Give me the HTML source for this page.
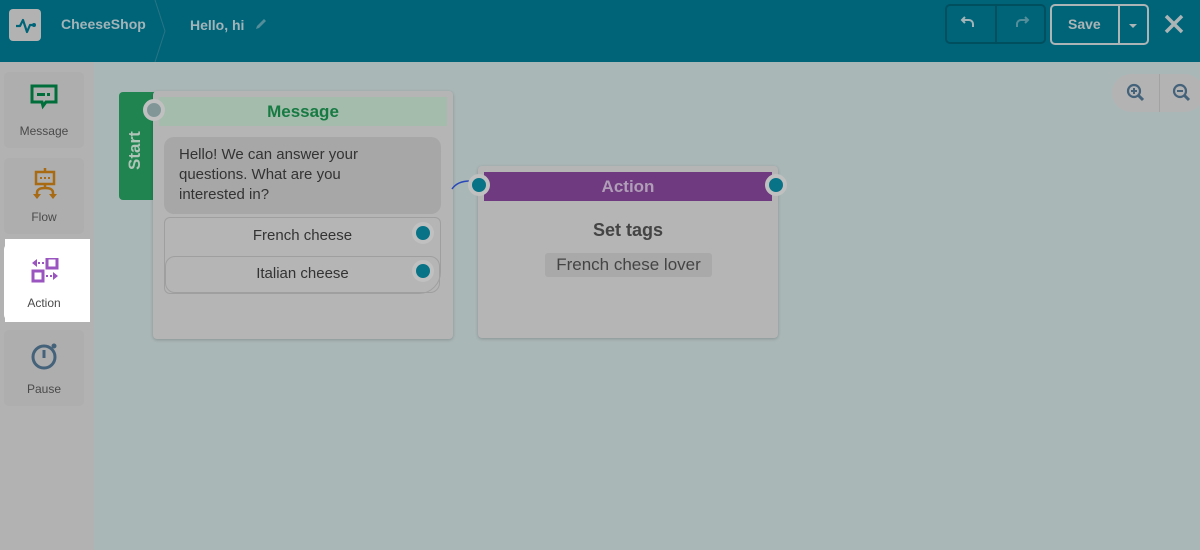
<!DOCTYPE html>
<html><head><style>
*{box-sizing:border-box;margin:0;padding:0}
body{width:1200px;height:550px;overflow:hidden;background:#aab7b7;font-family:"Liberation Sans",sans-serif;position:relative}
.hdr{position:absolute;left:0;top:0;width:1200px;height:62px;background:#006479}
.abs{position:absolute}
.side{position:absolute;left:0;top:62px;width:94px;height:488px;background:#b2b2b2}
.tool{position:absolute;left:4px;width:80px;height:76px;background:#aeaeae;border-radius:5px;text-align:center;font-size:12px;color:#4a4a4a}
.tool span{position:absolute;left:0;right:0;top:52px}
.node{position:absolute;background:#b5b5b5;border-radius:4px;box-shadow:0 1px 3px rgba(0,0,0,.2)}
.dot{position:absolute;width:22px;height:22px;border-radius:50%;background:#087387;border:4px solid #c0c0c0}
</style></head><body>
<div class="hdr">
  <div class="abs" style="left:9px;top:9px;width:32px;height:32px;background:#b2b2b2;border-radius:4px">
    <svg width="32" height="32" viewBox="0 0 32 32"><path d="M7 17h4l3-6 4 12 3-7h3" stroke="#006479" stroke-width="2.2" fill="none" stroke-linejoin="round"/><circle cx="25" cy="16" r="2" fill="#006479"/></svg>
  </div>
  <div class="abs" style="left:61px;top:16px;font-size:14px;font-weight:bold;color:#a2b4b8">CheeseShop</div>
  <svg class="abs" style="left:154px;top:0" width="14" height="62"><path d="M1 0 L11 31 L1 62" stroke="#2a7385" fill="none"/></svg>
  <div class="abs" style="left:190px;top:17px;font-size:14px;font-weight:bold;color:#a2b4b8">Hello, hi</div>
  <svg class="abs" style="left:254px;top:17px" width="14" height="14"><path d="M2 12l1-3 7-7 2 2-7 7z" fill="#558e9b"/></svg>
  <div class="abs" style="left:945px;top:4px;width:101px;height:40px;border:2px solid #004f5f;border-radius:5px"></div>
  <div class="abs" style="left:995px;top:5px;width:2px;height:38px;background:#004f5f"></div>
  <svg class="abs" style="left:960px;top:14px" width="18" height="18"><path d="M5 3L2 6l3 3M2 6h7a4 4 0 0 1 4 4v3" stroke="#a2b4b8" stroke-width="2" fill="none"/></svg>
  <svg class="abs" style="left:1012px;top:14px" width="18" height="18"><path d="M13 3l3 3-3 3M16 6H9a4 4 0 0 0-4 4v3" stroke="#558e9b" stroke-width="2" fill="none"/></svg>
  <div class="abs" style="left:1050px;top:4px;width:99px;height:41px;border:2px solid #adb4b5;border-radius:5px"></div>
  <div class="abs" style="left:1118px;top:5px;width:2px;height:39px;background:#adb4b5"></div>
  <div class="abs" style="left:1068px;top:16px;font-size:14px;font-weight:bold;color:#adb4b5">Save</div>
  <div class="abs" style="left:1129px;top:24px;border-left:4px solid transparent;border-right:4px solid transparent;border-top:4px solid #adb4b5"></div>
  <svg class="abs" style="left:1163px;top:13px" width="22" height="22"><path d="M3 3L19 19M19 3L3 19" stroke="#adb4b5" stroke-width="3.5"/></svg>
</div>
<div class="side">
  <div class="tool" style="top:10px"><svg class="abs" style="left:26px;top:12px" width="28" height="28"><path d="M2 2h24v16H16l-3 4-1-4H2z" fill="none" stroke="#006e3a" stroke-width="3"/><rect x="7" y="9" width="8" height="3" fill="#006e3a"/><rect x="17" y="9" width="3" height="3" fill="#006e3a"/></svg><span>Message</span></div>
  <div class="tool" style="top:96px"><svg class="abs" style="left:26px;top:10px" width="30" height="34"><rect x="6" y="4" width="18" height="12" fill="none" stroke="#a86a12" stroke-width="2.5"/><rect x="10" y="9" width="2" height="2" fill="#a86a12"/><rect x="14" y="9" width="2" height="2" fill="#a86a12"/><rect x="18" y="9" width="2" height="2" fill="#a86a12"/><path d="M15 0v4M15 16v4M15 20c-5 0-8 1-8 5v3M15 20c5 0 8 1 8 5v3" stroke="#a86a12" stroke-width="2.5" fill="none"/><path d="M3 26l4 5 4-5zM19 26l4 5 4-5z" fill="#a86a12"/></svg><span>Flow</span></div>
  <div class="abs" style="left:5px;top:177px;width:85px;height:83px;background:#fff"></div>
  <div class="tool" style="top:182px;background:#fff"><svg class="abs" style="left:27px;top:14px" width="28" height="26"><path d="M1 5l5-4v8z" fill="#9a55c0"/><rect x="7" y="4" width="2" height="2" fill="#9a55c0"/><rect x="11" y="4" width="2" height="2" fill="#9a55c0"/><rect x="16" y="0" width="10" height="10" fill="none" stroke="#9a55c0" stroke-width="3"/><rect x="2" y="13" width="10" height="10" fill="none" stroke="#9a55c0" stroke-width="3"/><rect x="15" y="17" width="2" height="2" fill="#9a55c0"/><rect x="19" y="17" width="2" height="2" fill="#9a55c0"/><path d="M27 18l-5-4v8z" fill="#9a55c0"/></svg><span>Action</span></div>
  <div class="tool" style="top:268px"><svg class="abs" style="left:26px;top:11px" width="30" height="30"><circle cx="14" cy="16" r="11" fill="none" stroke="#44627a" stroke-width="3"/><path d="M14 9v8" stroke="#44627a" stroke-width="3"/><circle cx="24" cy="5" r="2.5" fill="#44627a"/></svg><span>Pause</span></div>
</div>
<div class="abs" style="left:1112px;top:74px;width:92px;height:38px;border-radius:19px;background:#b3b3b3"></div>
<div class="abs" style="left:1159px;top:74px;width:1px;height:38px;background:#a2a2a2"></div>
<svg class="abs" style="left:1126px;top:83px" width="20" height="20"><circle cx="8" cy="8" r="6" fill="none" stroke="#44627a" stroke-width="2.2"/><path d="M12 12l5 5" stroke="#44627a" stroke-width="3"/><path d="M5 8h6M8 5v6" stroke="#44627a" stroke-width="2"/></svg>
<svg class="abs" style="left:1172px;top:83px" width="20" height="20"><circle cx="8" cy="8" r="6" fill="none" stroke="#44627a" stroke-width="2.2"/><path d="M12 12l5 5" stroke="#44627a" stroke-width="3"/><path d="M5 8h6" stroke="#44627a" stroke-width="2"/></svg>

<div class="abs" style="left:119px;top:92px;width:40px;height:108px;background:#1f8450;border-radius:4px 0 0 4px"></div>
<div class="abs" style="left:125px;top:170px;transform:rotate(-90deg);transform-origin:left top;font-size:17px;font-weight:bold;color:#b0c4b8;width:60px;line-height:20px">Start</div>
<div class="node" style="left:153px;top:91px;width:300px;height:248px">
  <div class="abs" style="left:6px;top:6px;width:288px;height:29px;background:#a3bcab;text-align:center;font-size:17px;font-weight:bold;color:#177a43;line-height:29px">Message</div>
  <div class="abs" style="left:11px;top:46px;width:277px;height:77px;background:#a7a7a7;border-radius:10px;padding:8px 0 0 15px;font-size:15px;line-height:20px;color:#333">Hello! We can answer your<br>questions. What are you<br>interested in?</div>
  <div class="abs" style="left:11px;top:126px;width:277px;height:77px;border:1px solid #9f9f9f;border-radius:6px 6px 22px 6px"></div>
  <div class="abs" style="left:11px;top:126px;width:277px;height:38px;text-align:center;font-size:15px;line-height:38px;color:#333">French cheese</div>
  <div class="abs" style="left:12px;top:165px;width:275px;height:37px;border:1px solid #9f9f9f;border-radius:10px;text-align:center;font-size:15px;line-height:34px;color:#333">Italian cheese</div>
</div>
<div class="dot" style="left:143px;top:99px;background:#819797"></div>
<div class="dot" style="left:412px;top:222px"></div>
<div class="dot" style="left:412px;top:260px"></div>
<svg class="abs" style="left:450px;top:175px" width="30" height="20"><path d="M2 14c4-6 10-8 18-8" stroke="#2a48b8" stroke-width="1.5" fill="none"/></svg>
<div class="node" style="left:478px;top:166px;width:300px;height:172px">
  <div class="abs" style="left:6px;top:6px;width:288px;height:29px;background:#6f3a80;text-align:center;font-size:17px;font-weight:bold;color:#b09db7;line-height:29px">Action</div>
  <div class="abs" style="left:0;top:54px;width:300px;text-align:center;font-size:18px;font-weight:bold;color:#444">Set tags</div>
  <div class="abs" style="left:67px;top:87px;width:167px;height:24px;background:#a9a9a9;border-radius:3px;text-align:center;font-size:17px;line-height:24px;color:#444">French chese lover</div>
</div>
<div class="dot" style="left:468px;top:174px"></div>
<div class="dot" style="left:765px;top:174px"></div>
</body></html>
